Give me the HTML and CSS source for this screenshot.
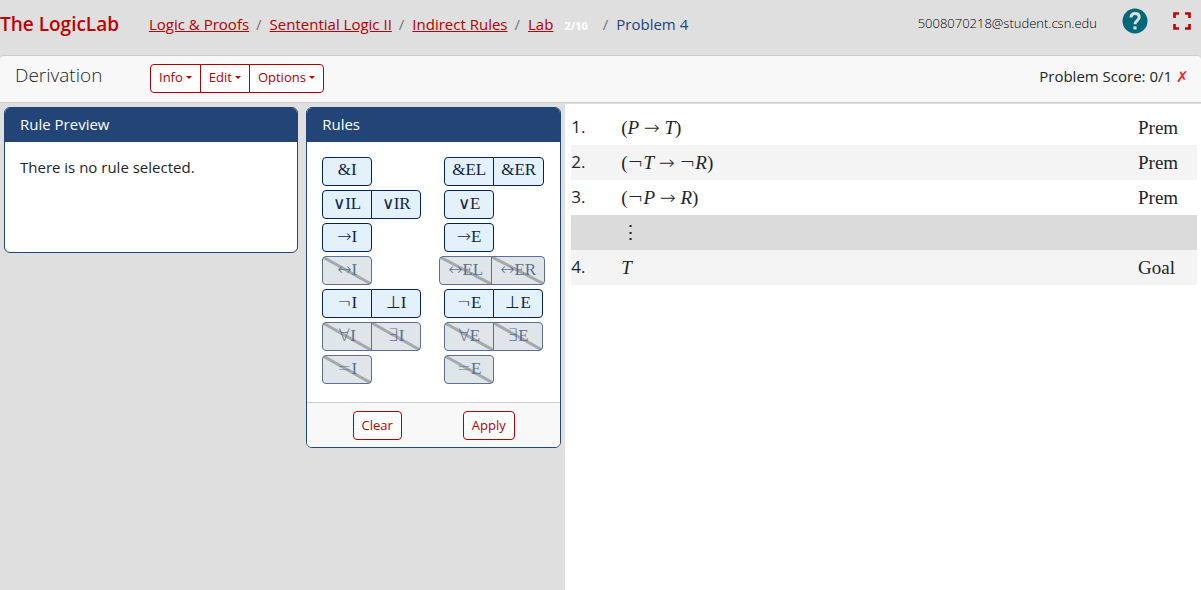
FILE: index.html
```html
<!DOCTYPE html>
<html lang="en">
  <head>
    <meta charset="UTF-8" />
    <meta name="viewport" content="width=device-width, initial-scale=1.0" />
    <title>The LogicLab</title>
    <link rel="stylesheet" href="styles.css">
  </head>
  <body>
    <header class="site-header">
      <h1 class="brand">The LogicLab</h1>
      <nav>
        <ol class="breadcrumb">
          <li><a href="#">Logic &amp; Proofs</a></li>
          <li><a href="#">Sentential Logic II</a></li>
          <li><a href="#">Indirect Rules</a></li>
          <li><a href="#">Lab</a><span class="badge">2/10</span></li>
          <li class="current">Problem 4</li>
        </ol>
      </nav>
      <div class="account">
        <span class="email">5008070218@student.csn.edu</span>
        <button class="icon-button" type="button">
          <svg width="26" height="26" viewBox="0 0 26 26">
            <circle cx="13" cy="13" r="12.5" fill="#00687b" />
            <path d="M9 9.600C9 7 10.600 5.600 13 5.600s4.200 1.400 4.200 3.700c0 3.200-4.200 3.500-4.200 7" fill="none" stroke="#dfdfdf" stroke-width="3" />
            <rect x="11.400" y="18.400" width="3.200" height="3" fill="#dfdfdf" />
          </svg>
        </button>
        <button class="icon-button" type="button">
          <svg width="18" height="18" viewBox="0 0 18 18">
            <path d="M1.5 6V1.5H6M12 1.5h4.5V6M16.5 12v4.5H12M6 16.5H1.5V12" fill="none" stroke="#c00000" stroke-width="2.6" />
          </svg>
        </button>
      </div>
    </header>

    <!-- Problem toolbar -->
    <div class="toolbar">
      <h2 class="toolbar-title">Derivation</h2>
      <div class="btn-group">
        <button class="btn caret" type="button">Info</button>
        <button class="btn caret" type="button">Edit</button>
        <button class="btn caret" type="button">Options</button>
      </div>
      <div class="score">Problem Score: 0/1 <span class="wrong">✗</span></div>
    </div>

    <main class="workspace">
      <div class="sidebar">
        <section class="card preview">
          <h3 class="card-header">Rule Preview</h3>
          <p class="card-body">There is no rule selected.</p>
        </section>

        <section class="card rules">
          <h3 class="card-header">Rules</h3>
          <div class="card-body rule-grid">
            <div class="btn-group"><button class="rule" type="button">&amp;I</button></div>
            <div class="btn-group"><button class="rule" type="button">&amp;EL</button><button class="rule" type="button">&amp;ER</button></div>

            <div class="btn-group"><button class="rule" type="button"><span class="op">∨</span>IL</button><button class="rule" type="button"><span class="op">∨</span>IR</button></div>
            <div class="btn-group"><button class="rule" type="button"><span class="op">∨</span>E</button></div>

            <div class="btn-group"><button class="rule" type="button"><span class="op">→</span>I</button></div>
            <div class="btn-group"><button class="rule" type="button"><span class="op">→</span>E</button></div>

            <div class="btn-group"><button class="rule" type="button" disabled><span class="op">↔</span>I</button></div>
            <div class="btn-group wide"><button class="rule" type="button" disabled><span class="op">↔</span>EL</button><button class="rule" type="button" disabled><span class="op">↔</span>ER</button></div>

            <div class="btn-group"><button class="rule" type="button"><span class="op">¬</span>I</button><button class="rule" type="button"><span class="op">⊥</span>I</button></div>
            <div class="btn-group"><button class="rule" type="button"><span class="op">¬</span>E</button><button class="rule" type="button"><span class="op">⊥</span>E</button></div>

            <div class="btn-group"><button class="rule" type="button" disabled><span class="op">∀</span>I</button><button class="rule" type="button" disabled><span class="op">∃</span>I</button></div>
            <div class="btn-group"><button class="rule" type="button" disabled><span class="op">∀</span>E</button><button class="rule" type="button" disabled><span class="op">∃</span>E</button></div>

            <div class="btn-group"><button class="rule" type="button" disabled><span class="op">=</span>I</button></div>
            <div class="btn-group"><button class="rule" type="button" disabled><span class="op">=</span>E</button></div>
          </div>
          <div class="card-footer">
            <button class="btn" type="button">Clear</button>
            <button class="btn" type="button">Apply</button>
          </div>
        </section>
      </div>

      <!-- Proof lines -->
      <div class="proof">
        <table class="lines">
          <tr>
            <td class="number">1.</td>
            <td class="formula">(<i>P</i> <span class="op">→</span> <i>T</i>)</td>
            <td class="reason">Prem</td>
          </tr>
          <tr class="shaded">
            <td class="number">2.</td>
            <td class="formula">(<span class="op">¬</span><i>T</i> <span class="op">→</span> <span class="op">¬</span><i>R</i>)</td>
            <td class="reason">Prem</td>
          </tr>
          <tr>
            <td class="number">3.</td>
            <td class="formula">(<span class="op">¬</span><i>P</i> <span class="op">→</span> <i>R</i>)</td>
            <td class="reason">Prem</td>
          </tr>
          <tr class="gap">
            <td class="number"></td>
            <td class="formula">⋮</td>
            <td class="reason"></td>
          </tr>
          <tr class="shaded">
            <td class="number">4.</td>
            <td class="formula"><i>T</i></td>
            <td class="reason">Goal</td>
          </tr>
        </table>
      </div>
    </main>
  </body>
</html>
```
FILE: styles.css
```css
* {
  box-sizing: border-box;
}

body {
  margin: 0;
  min-height: 100vh;
  display: flex;
  flex-direction: column;
  background-color: #dfdfdf;
  color: #212529;
  font-family: 'Open Sans', sans-serif;
  font-size: 15px;
}

h1,
h2,
h3,
p {
  margin: 0;
}

button {
  font-family: inherit;
  cursor: pointer;
}

.site-header {
  display: flex;
  align-items: center;
  height: 55px;
  padding: 0 10px 8px 0;
}

.brand {
  width: 149px;
  color: #c00000;
  font-size: 19px;
  font-weight: 600;
}

.breadcrumb {
  display: flex;
  margin: 0;
  padding: 0;
  list-style: none;
}

.breadcrumb li + li::before {
  content: '/';
  padding: 0 8px 0 7px;
  color: #6c757d;
}

.breadcrumb a {
  color: #b00000;
}

.breadcrumb .current {
  color: #224477;
}

.badge {
  padding: 0 8px 0 11px;
  color: #fff;
  font-size: 11px;
  font-weight: 700;
}

.account {
  display: flex;
  align-items: center;
  margin-left: auto;
}

.email {
  padding-bottom: 2px;
  color: #000;
  font-size: 13px;
  font-weight: 300;
}

.icon-button {
  display: flex;
  margin: 0 0 5px 25px;
  padding: 0;
  border: none;
  background: none;
}

.toolbar {
  display: flex;
  align-items: center;
  height: 48px;
  padding: 0 12px 2px 15px;
  border: 1px solid #cdcdd1;
  border-width: 1px 0;
  border-radius: 4px 4px 0 0;
  background-color: #f8f8f8;
}

.toolbar-title {
  width: 135px;
  padding-bottom: 6px;
  font-size: 19px;
  font-weight: 300;
}

.score {
  margin-left: auto;
  padding-bottom: 4px;
}

.wrong {
  color: #f5222d;
}

.btn-group {
  display: flex;
}

.btn {
  height: 29px;
  padding: 0 8px 2px;
  border: 1px solid #b00000;
  border-radius: 4px;
  background-color: #fff;
  color: #b00000;
  font-size: 13px;
}

.caret::after {
  content: '';
  display: inline-block;
  margin-left: 3px;
  vertical-align: 3px;
  border-top: 3px solid;
  border-right: 3px solid transparent;
  border-left: 3px solid transparent;
}

.btn-group button:not(:first-child) {
  margin-left: -1px;
  border-top-left-radius: 0;
  border-bottom-left-radius: 0;
}

.btn-group button:not(:last-child) {
  border-top-right-radius: 0;
  border-bottom-right-radius: 0;
}

.workspace {
  flex: 1;
  display: grid;
  grid-template-columns: 8fr 9fr;
}

.sidebar {
  display: grid;
  grid-template-columns: 1fr 255px;
  gap: 8px;
  align-items: start;
  padding: 4px;
}

.card {
  overflow: hidden;
  border: 1px solid #224477;
  border-radius: 6px;
  background-color: #fff;
}

.preview {
  min-height: 146px;
}

.card-header {
  height: 34px;
  padding: 0 15px;
  background-color: #224477;
  color: #fff;
  font-size: 15px;
  font-weight: 400;
  line-height: 32px;
}

.card-body {
  padding: 15px;
}

.rule-grid {
  display: grid;
  grid-template-columns: 1fr 101px;
  gap: 4px 0;
  padding-bottom: 18px;
}

.rule {
  min-width: 50px;
  height: 29px;
  padding: 0 7px 3px;
  border: 1px solid #002255;
  border-radius: 4px;
  background-color: #e3f2fa;
  color: #12233f;
  font-family: 'Liberation Serif', serif;
  font-size: 17px;
  line-height: 20px;
}

.op {
  font-family: 'DejaVu Sans', sans-serif;
  font-weight: 200;
}

.rule .op {
  font-size: 17px;
}

.rule:disabled {
  border-color: #5a6f92;
  background-color: #dfe5e8;
  background-image: linear-gradient(to top right, transparent calc(50% - 2px), #a5a9ab calc(50% - 1px), #a5a9ab calc(50% + 1px), transparent calc(50% + 2px));
  color: #5a6f92;
}

.wide {
  justify-self: end;
}

.wide .rule {
  padding: 0 8px 3px;
}

.card-footer {
  display: flex;
  justify-content: center;
  gap: 61px;
  padding: 8px 0 7px;
  border-top: 1px solid #cdcdcd;
  background-color: #f8f8f8;
}

.proof {
  margin-top: 1px;
  padding: 6px 4px 6px 6px;
  background-color: #fff;
}

.lines {
  width: 100%;
  border-collapse: collapse;
}

.lines tr {
  height: 35px;
}

.lines td {
  padding: 0;
}

.shaded {
  background-color: #f4f4f4;
}

.gap {
  background-color: #dbdbdb;
}

.lines .number {
  width: 50px;
  padding-bottom: 2px;
  font-size: 17px;
}

.formula,
.reason {
  font-family: 'Liberation Serif', serif;
  font-size: 19px;
}

.reason {
  width: 59px;
}
```
